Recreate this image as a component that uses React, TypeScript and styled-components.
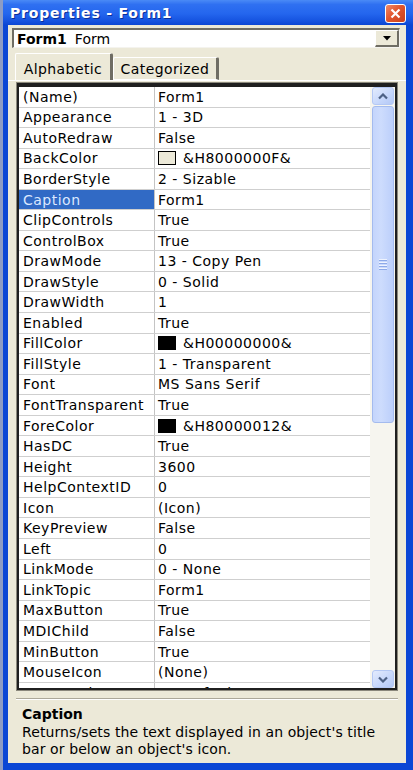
import React from "react";
import styled, { createGlobalStyle } from "styled-components";

const Global = createGlobalStyle`
  html, body { margin: 0; padding: 0; background: #ffffff; }
  body { font-family: "DejaVu Sans", "Liberation Sans", sans-serif; }
  * { box-sizing: border-box; }
`;

const Window = styled.div`
  width: 413px;
  height: 770px;
  display: flex;
  flex-direction: column;
  background: #0a46d5;
  border-left: 3px solid #8d9cc4;
  overflow: hidden;
`;

const TitleBar = styled.div`
  height: 25px;
  flex: none;
  display: flex;
  align-items: center;
  justify-content: space-between;
  padding: 0 7px 0 7px;
  background: linear-gradient(to bottom, #4a8af6 0%, #2f70f1 18%, #2466ee 55%, #1552df 85%, #0b46d3 100%);
`;

const TitleText = styled.span`
  color: #ffffff;
  font-family: "DejaVu Sans", sans-serif;
  font-weight: bold;
  font-size: 14px;
  letter-spacing: 0.8px;
  text-shadow: 1px 1px 0 #0a2f9a;
`;

const CloseButton = styled.div`
  width: 21px;
  height: 19px;
  margin-top: 1px;
  border: 1px solid #ffffff;
  border-radius: 3px;
  background: linear-gradient(135deg, #f08a6a 0%, #e2562e 45%, #c8401c 100%);
  display: flex;
  align-items: center;
  justify-content: center;
`;

const Body = styled.div`
  flex: 1;
  margin: 0 7px 7px 5px;
  background: #ece9d8;
  display: flex;
  flex-direction: column;
  min-height: 0;
`;

const Combo = styled.div`
  margin: 3px 6px 0 4px;
  height: 20px;
  flex: none;
  background: #ffffff;
  border-top: 2px solid #6f6d64;
  border-left: 2px solid #6f6d64;
  border-right: 1px solid #f4f3ee;
  border-bottom: 1px solid #f4f3ee;
  display: flex;
  align-items: center;
  font-size: 14px;
  color: #000;
`;

const ComboText = styled.div`
  flex: 1;
  padding-left: 3px;
  white-space: nowrap;
  b { font-weight: bold; margin-right: 8px; }
`;

const DropButton = styled.div`
  width: 24px;
  height: 100%;
  background: #ece9d8;
  border-top: 1px solid #ffffff;
  border-left: 1px solid #ffffff;
  border-right: 2px solid #6f6d64;
  border-bottom: 2px solid #6f6d64;
  display: flex;
  align-items: center;
  justify-content: center;
`;

const Tabs = styled.div`
  margin: 5px 0 0 7px;
  height: 27px;
  flex: none;
  display: flex;
  align-items: flex-end;
`;

const Tab = styled.div<{ $active?: boolean }>`
  height: ${(p) => (p.$active ? 27 : 23)}px;
  width: ${(p) => (p.$active ? 98 : 106)}px;
  padding-top: ${(p) => (p.$active ? 3 : 1)}px;
  background: #ece9d8;
  border-top: 1px solid #ffffff;
  border-left: 1px solid #ffffff;
  border-right: 3px solid #6f6d64;
  border-radius: 2px 2px 0 0;
  display: flex;
  align-items: center;
  justify-content: center;
  font-size: 14px;
  letter-spacing: 0.4px;
  color: #000;
  border-bottom: ${(p) => (p.$active ? "none" : "1px solid #ffffff")};
`;

const Panel = styled.div`
  flex: 1;
  min-height: 0;
  border-top: 1px solid #ffffff;
  padding: 1px 8px 0 8px;
  display: flex;
  flex-direction: column;
`;

const GridOuter = styled.div`
  height: 609px;
  flex: none;
  border: 1px solid #8b887c;
  display: flex;
`;

const GridInner = styled.div`
  flex: 1;
  border: 2px solid #1f1f1f;
  border-top-width: 4px;
  display: flex;
  min-width: 0;
  background: #ffffff;
`;

const Rows = styled.div`
  flex: 1;
  overflow: hidden;
  display: flex;
  flex-direction: column;
`;

const Row = styled.div`
  height: 20.55px;
  flex: none;
  display: flex;
  border-bottom: 1px solid #cfcfcf;
  font-size: 14px;
  letter-spacing: 0.5px;
  color: #000;
`;

const NameCell = styled.div<{ $selected?: boolean }>`
  width: 136px;
  flex: none;
  padding-left: 4px;
  display: flex;
  align-items: center;
  white-space: nowrap;
  overflow: hidden;
  border-right: 1px solid #c4c4c4;
  background: ${(p) => (p.$selected ? "#316ac5" : "transparent")};
  color: ${(p) => (p.$selected ? "#dce8ff" : "#000")};
`;

const ValueCell = styled.div`
  flex: 1;
  padding-left: 3px;
  display: flex;
  align-items: center;
  white-space: nowrap;
  overflow: hidden;
`;

const Swatch = styled.span<{ $color: string }>`
  width: 18px;
  height: 14px;
  flex: none;
  background: ${(p) => p.$color};
  border: 1px solid #000;
  margin-right: 7px;
`;

const ScrollBar = styled.div`
  width: 25px;
  flex: none;
  background: #f6f5ef;
  display: flex;
  flex-direction: column;
  padding: 0 1px 0 2px;
`;

const ScrollButton = styled.div`
  height: 18px;
  flex: none;
  border: 1px solid #b4c8f4;
  border-radius: 3px;
  background: linear-gradient(to bottom right, #e3ebfd 0%, #c8d8fb 55%, #b3c8f6 100%);
  display: flex;
  align-items: center;
  justify-content: center;
`;

const Thumb = styled.div`
  height: 317px;
  flex: none;
  margin: 1px 0 0 0;
  border: 1px solid #a4bbee;
  border-radius: 3px;
  background: linear-gradient(to right, #c4d5fc 0%, #cddcfd 40%, #bccffb 100%);
  display: flex;
  flex-direction: column;
  align-items: center;
  justify-content: center;
  gap: 1px;
`;

const Grip = styled.span`
  width: 8px;
  height: 1px;
  background: #eef3fe;
  box-shadow: 0 1px 0 #8eaae8;
  margin-bottom: 1px;
`;

const Track = styled.div`
  flex: 1;
`;

const Splitter = styled.div`
  height: 8px;
  flex: none;
  border-bottom: 1px solid #aca899;
`;

const Description = styled.div`
  flex: 1;
  border-top: 1px solid #ffffff;
  padding: 4px 6px 0 6px;
  color: #000;
  font-size: 14px;
`;

const DescTitle = styled.div`
  font-weight: bold;
  line-height: 20px;
`;

const DescText = styled.div`
  line-height: 17px;
  letter-spacing: 0.1px;
`;

type Prop = { name: string; value: string; swatch?: string };

const props: Prop[] = [
  { name: "(Name)", value: "Form1" },
  { name: "Appearance", value: "1 - 3D" },
  { name: "AutoRedraw", value: "False" },
  { name: "BackColor", value: "&H8000000F&", swatch: "#ece9d8" },
  { name: "BorderStyle", value: "2 - Sizable" },
  { name: "Caption", value: "Form1" },
  { name: "ClipControls", value: "True" },
  { name: "ControlBox", value: "True" },
  { name: "DrawMode", value: "13 - Copy Pen" },
  { name: "DrawStyle", value: "0 - Solid" },
  { name: "DrawWidth", value: "1" },
  { name: "Enabled", value: "True" },
  { name: "FillColor", value: "&H00000000&", swatch: "#000000" },
  { name: "FillStyle", value: "1 - Transparent" },
  { name: "Font", value: "MS Sans Serif" },
  { name: "FontTransparent", value: "True" },
  { name: "ForeColor", value: "&H80000012&", swatch: "#000000" },
  { name: "HasDC", value: "True" },
  { name: "Height", value: "3600" },
  { name: "HelpContextID", value: "0" },
  { name: "Icon", value: "(Icon)" },
  { name: "KeyPreview", value: "False" },
  { name: "Left", value: "0" },
  { name: "LinkMode", value: "0 - None" },
  { name: "LinkTopic", value: "Form1" },
  { name: "MaxButton", value: "True" },
  { name: "MDIChild", value: "False" },
  { name: "MinButton", value: "True" },
  { name: "MouseIcon", value: "(None)" },
  { name: "MousePointer", value: "0 - Default" },
];

const Chevron = ({ up }: { up?: boolean }) => (
  <svg width="10" height="7" viewBox="0 0 10 7">
    <path
      d={up ? "M1 5.5 L5 1.5 L9 5.5" : "M1 1.5 L5 5.5 L9 1.5"}
      fill="none"
      stroke="#4d6185"
      strokeWidth="2.2"
    />
  </svg>
);

export default function App() {
  return (
    <>
      <Global />
      <Window>
        <TitleBar>
          <TitleText>Properties - Form1</TitleText>
          <CloseButton>
            <svg width="11" height="11" viewBox="0 0 11 11">
              <path d="M1.5 1.5 L9.5 9.5 M9.5 1.5 L1.5 9.5" stroke="#fff" strokeWidth="2.2" />
            </svg>
          </CloseButton>
        </TitleBar>
        <Body>
          <Combo>
            <ComboText>
              <b>Form1</b>Form
            </ComboText>
            <DropButton>
              <svg width="8" height="5" viewBox="0 0 8 5">
                <path d="M0 0 H8 L4 4.5 Z" fill="#000" />
              </svg>
            </DropButton>
          </Combo>
          <Tabs>
            <Tab $active>Alphabetic</Tab>
            <Tab>Categorized</Tab>
          </Tabs>
          <Panel>
            <GridOuter>
              <GridInner>
                <Rows>
                  {props.map((p) => (
                    <Row key={p.name}>
                      <NameCell $selected={p.name === "Caption"}>{p.name}</NameCell>
                      <ValueCell>
                        {p.swatch && <Swatch $color={p.swatch} />}
                        {p.value}
                      </ValueCell>
                    </Row>
                  ))}
                </Rows>
                <ScrollBar>
                  <ScrollButton>
                    <Chevron up />
                  </ScrollButton>
                  <Thumb>
                    <Grip />
                    <Grip />
                    <Grip />
                    <Grip />
                  </Thumb>
                  <Track />
                  <ScrollButton>
                    <Chevron />
                  </ScrollButton>
                </ScrollBar>
              </GridInner>
            </GridOuter>
            <Splitter />
            <Description>
              <DescTitle>Caption</DescTitle>
              <DescText>
                Returns/sets the text displayed in an object's title bar or below an object's icon.
              </DescText>
            </Description>
          </Panel>
        </Body>
      </Window>
    </>
  );
}
